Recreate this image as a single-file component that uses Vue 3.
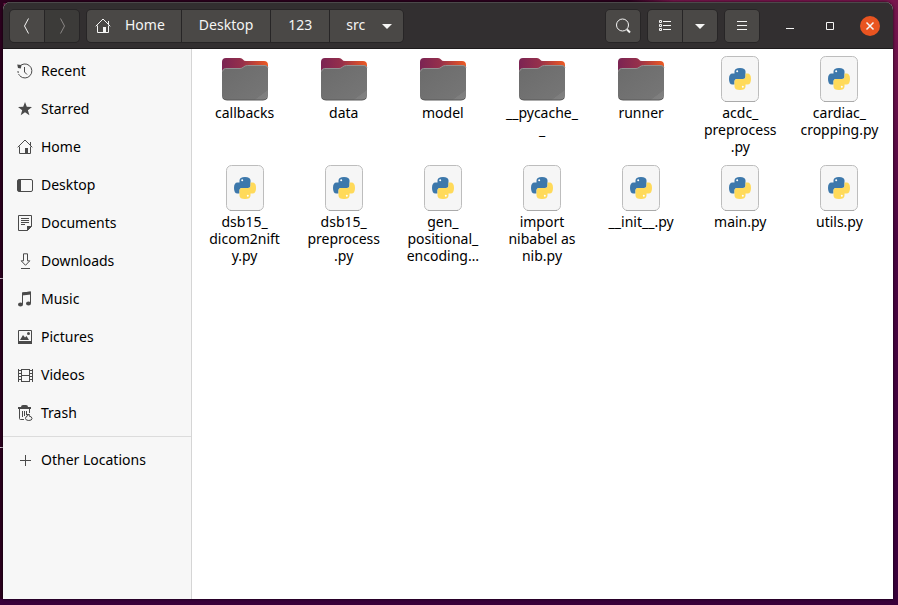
<script setup>
const places = [
  { name: 'Recent', icon: 'recent' },
  { name: 'Starred', icon: 'star' },
  { name: 'Home', icon: 'home' },
  { name: 'Desktop', icon: 'desktop' },
  { name: 'Documents', icon: 'documents' },
  { name: 'Downloads', icon: 'downloads' },
  { name: 'Music', icon: 'music' },
  { name: 'Pictures', icon: 'pictures' },
  { name: 'Videos', icon: 'videos' },
  { name: 'Trash', icon: 'trash' },
]

const items = [
  { type: 'folder', name: 'callbacks' },
  { type: 'folder', name: 'data' },
  { type: 'folder', name: 'model' },
  { type: 'folder', name: '__pycache_\n_' },
  { type: 'folder', name: 'runner' },
  { type: 'python', name: 'acdc_\npreprocess\n.py' },
  { type: 'python', name: 'cardiac_\ncropping.py' },
  { type: 'python', name: 'dsb15_\ndicom2nift\ny.py' },
  { type: 'python', name: 'dsb15_\npreprocess\n.py' },
  { type: 'python', name: 'gen_\npositional_\nencoding…' },
  { type: 'python', name: 'import\nnibabel as\nnib.py' },
  { type: 'python', name: '__init__.py' },
  { type: 'python', name: 'main.py' },
  { type: 'python', name: 'utils.py' },
]
</script>

<template>
  <svg class="defs" width="0" height="0" aria-hidden="true">
    <defs>
      <linearGradient id="tab" x1="0" y1="0" x2="1" y2="0">
        <stop offset="0" stop-color="#7b2453" />
        <stop offset="0.45" stop-color="#96304b" />
        <stop offset="1" stop-color="#ee5a22" />
      </linearGradient>
      <linearGradient id="front" x1="0" y1="0" x2="1" y2="1">
        <stop offset="0" stop-color="#6b6b6b" />
        <stop offset="0.85" stop-color="#757575" />
        <stop offset="0.86" stop-color="#7e7e7e" />
        <stop offset="1" stop-color="#828282" />
      </linearGradient>
    </defs>
    <symbol id="i-home" viewBox="0 0 16 16">
      <path d="M.7 8.300 8 1l7.300 7.300M2.500 7.500v7h11v-7M13.500 3v4" fill="none" stroke="currentColor" />
      <path d="M8 9h3v6H8z" fill="currentColor" />
    </symbol>
    <symbol id="i-recent" viewBox="0 0 16 16">
      <path d="M2.300 3.700A7 7 0 1 1 3 13" fill="none" stroke="currentColor" />
      <path d="M1 8A7 7 0 0 0 3 13" fill="none" stroke="currentColor" stroke-dasharray="2 1" />
      <path d="M7.500 4v5l2.500 2.500" fill="none" stroke="currentColor" />
      <path d="M.2 1.500 4.500 2 3.800 5.500 1 5z" fill="currentColor" />
    </symbol>
    <symbol id="i-star" viewBox="0 0 16 16">
      <path d="m8 1 1.800 4.800 5.200.2-4.100 3.200 1.500 5L8 11.300 3.700 14.200l1.500-5L1 6l5.200-.2z" fill="currentColor" />
    </symbol>
    <symbol id="i-desktop" viewBox="0 0 16 16">
      <rect x=".5" y="2.500" width="15" height="12" rx="1.500" fill="none" stroke="currentColor" />
      <path d="M1 3h3v11H1z" fill="currentColor" />
    </symbol>
    <symbol id="i-documents" viewBox="0 0 16 16">
      <path d="M1.500.5h13v11l-4 4h-9z M4 3.500h8M4 5.500h8M4 7.500h8M4 9.500h4" fill="none" stroke="currentColor" />
      <path d="M10 11h5l-5 5z" fill="currentColor" />
    </symbol>
    <symbol id="i-downloads" viewBox="0 0 16 16">
      <path d="M6.500.8h4v7h2.300L8.500 12.300 4.200 7.800h2.300zM4 15.500h9" fill="none" stroke="currentColor" />
    </symbol>
    <symbol id="i-music" viewBox="0 0 16 16">
      <path d="M5.500 13V2l8-1v11" fill="none" stroke="currentColor" />
      <path d="M5 1.500 14 .5v3L5 4.500z" fill="currentColor" />
      <ellipse cx="3.500" cy="13.500" rx="2.500" ry="2" fill="currentColor" />
      <ellipse cx="11.500" cy="12.500" rx="2.500" ry="2" fill="currentColor" />
    </symbol>
    <symbol id="i-pictures" viewBox="0 0 16 16">
      <path d="M1.500 1.500h13v12h-13z" fill="none" stroke="currentColor" />
      <path d="M1 12h14v3H1zM3 11l3-5 2 2.500L9.500 7l2.500 4z" fill="currentColor" />
      <circle cx="11.500" cy="4.500" r="1.500" fill="currentColor" />
    </symbol>
    <symbol id="i-videos" viewBox="0 0 16 16">
      <path d="M4.500 2v12.500M12.500 2v12.500M4 2.500h9M5 8.500h7M4 14.500h9M1.500 2v13M15.500 2v13" fill="none" stroke="currentColor" />
      <path d="M2 3.500h2M2 6.500h2M2 9.500h2M2 12.500h2M13 3.500h2M13 6.500h2M13 9.500h2M13 12.500h2" stroke="currentColor" />
    </symbol>
    <symbol id="i-trash" viewBox="0 0 16 16">
      <path d="M1 2h13v2H1zM4 2q0-2 2-2h3q2 0 2 2z" fill="currentColor" />
      <path d="M2.500 4v9.500q0 1 1 1H7M12.500 4v4M5.500 6v6M7.500 6v5M9.500 6v4" fill="none" stroke="currentColor" />
      <path d="M8.500 13.500q0-2 2-2.500l-.5-1.500h2.500L12 11q3 .5 3 2.500 0 2-3.200 2t-3.300-2z" fill="none" stroke="currentColor" />
    </symbol>
    <symbol id="i-plus" viewBox="0 0 16 16">
      <path d="M8.500 3v11M3 8.500h11" fill="none" stroke="currentColor" />
    </symbol>
    <symbol id="i-folder" viewBox="0 0 48 48">
      <path d="M1 39V7q0-4 4-4h14q2 0 3 1.500T25 6h18q4 0 4 4v29z" fill="url(#tab)" />
      <path d="M1 41V17q0-3.500 3.500-3.500H19q2 0 3.500-1.500t4-1.500H44q3 0 3 3V41q0 4-4 4H5q-4 0-4-4z" fill="url(#front)" />
      <path d="M1.500 16.500q.5-3 3-3H19q2 0 3.500-1.500t4-1.500H44q2.500 0 3 2.500" fill="none" stroke="#929292" />
      <path d="M2 43q1 2 4 2h36q3 0 4-2" fill="none" stroke="#5a5a5a" />
    </symbol>
    <symbol id="i-python" viewBox="0 0 48 48">
      <rect x="5.500" y="1.500" width="37" height="45" rx="5" fill="#f6f6f6" stroke="#bdbdbd" />
      <path d="M9 46.500h30" stroke="#aaa" />
      <g transform="translate(13 13)">
        <path d="M5.500 5.500v-2Q5.500 0 11 0t5.500 3.500v5q0 2.500-2.500 2.500H8q-2.500 0-2.500 2.500v3h-2Q0 16.500 0 11t3.500-5.500z" fill="#3d78ab" />
        <path d="M16.500 16.500v2q0 3.500-5.500 3.500t-5.500-3.500v-5Q5.500 11 8 11h6q2.500 0 2.500-2.500v-3h2q3.500 0 3.500 5.500t-3.500 5.500z" fill="#ffda5a" />
        <circle cx="8.200" cy="3.200" r="1" fill="#fff" />
        <circle cx="13.800" cy="18.800" r="1" fill="#fff" />
      </g>
    </symbol>
  </svg>

  <div class="desk">
    <div class="window">
      <header class="bar">
        <div class="group nav">
          <button type="button" aria-label="Back"><svg class="ic" viewBox="0 0 16 16"><path d="M9.500.5 5.500 8l4 7.500" fill="none" stroke="currentColor" /></svg></button>
          <button type="button" aria-label="Forward" disabled><svg class="ic" viewBox="0 0 16 16"><path d="M6.500.5l4 7.500-4 7.500" fill="none" stroke="currentColor" /></svg></button>
        </div>
        <nav class="group path" aria-label="Path">
          <button type="button" class="first"><svg class="ic"><use href="#i-home" /></svg><span class="label">Home</span></button>
          <button type="button"><span class="label">Desktop</span></button>
          <button type="button"><span class="label">123</span></button>
          <button type="button" class="last"><span class="label">src</span><svg class="ic" viewBox="0 0 16 16"><path d="M3 6h10l-5 5z" fill="currentColor" /></svg></button>
        </nav>
        <div class="tools">
          <div class="group"><button type="button" aria-label="Search"><svg class="ic" viewBox="0 0 16 16"><circle cx="7.500" cy="7" r="6" fill="none" stroke="currentColor" /><path d="m12 11.500 3 3" stroke="currentColor" stroke-width="2" /></svg></button></div>
          <div class="group">
            <button type="button" aria-label="List view"><svg class="ic" viewBox="0 0 16 16"><path d="M2.500 2.500h2v2h-2zM2.500 6.500h2v2h-2zM2.500 10.500h2v2h-2zM6 3.500h8M6 7.500h8M6 11.500h8" fill="none" stroke="currentColor" /></svg></button>
            <button type="button" aria-label="View options"><svg class="ic" viewBox="0 0 16 16"><path d="M3 6h10l-5 5z" fill="currentColor" /></svg></button>
          </div>
          <div class="group"><button type="button" aria-label="Menu"><svg class="ic" viewBox="0 0 16 16"><path d="M3 3.500h10M3 7.500h10M3 11.500h10" stroke="currentColor" /></svg></button></div>
        </div>
        <div class="controls">
          <button type="button" aria-label="Minimize"><svg class="ic" viewBox="0 0 16 16"><path d="M4 10.500h8" stroke="currentColor" /></svg></button>
          <button type="button" aria-label="Maximize"><svg class="ic" viewBox="0 0 16 16"><path d="M4.500 4.500h7v7h-7z" fill="none" stroke="currentColor" /></svg></button>
          <button type="button" aria-label="Close" class="close"><svg class="ic" viewBox="0 0 16 16"><path d="m4.500 4.500 7 7m0-7-7 7" stroke="currentColor" stroke-width="1.500" /></svg></button>
        </div>
      </header>

      <div class="body">
        <aside class="side">
          <a v-for="p in places" :key="p.name" href="#" class="place"><svg class="ic"><use :href="'#i-' + p.icon" /></svg><span class="label">{{ p.name }}</span></a>
          <hr />
          <a href="#" class="place"><svg class="ic"><use href="#i-plus" /></svg><span class="label">Other Locations</span></a>
        </aside>
        <main class="files">
          <a v-for="(f, n) in items" :key="n" href="#" class="item">
            <svg class="big"><use :href="'#i-' + f.type" /></svg>
            <span class="name">{{ f.name }}</span>
          </a>
        </main>
      </div>
    </div>
  </div>
</template>

<style>
body {
  background: #35042f;
}
</style>

<style scoped>
.defs {
  position: absolute;
}
.desk {
  box-sizing: border-box;
  min-height: 100vh;
  display: flex;
  padding: 2px 5px 6px 3px;
  background: linear-gradient(#c9b9c4, #c9b9c4) 0 46% / 3px 1px no-repeat,
    linear-gradient(#c9b9c4, #c9b9c4) 0 74% / 3px 1px no-repeat,
    linear-gradient(to right, #2c001e 0, #2c001e 70%, transparent 75%) 0 0 / 100% 3px no-repeat,
    linear-gradient(to right, #2c001e 0, #2c001e 3px, transparent 4px) 0 0 / 100% 99% no-repeat,
    linear-gradient(to bottom, #78164d 0, #4a0540 40%, #38003a 100%);
  font: 14px/17px "Noto Sans", "Open Sans", sans-serif;
}
.window {
  flex: 1;
  display: flex;
  flex-direction: column;
  border-radius: 8px 8px 0 0;
  overflow: hidden;
  background: #fff;
  box-shadow: 0 0 3px rgba(0, 0, 0, 0.8);
}
.bar {
  box-sizing: border-box;
  height: 47px;
  display: flex;
  align-items: center;
  gap: 6px;
  padding: 0 13px 0 6px;
  background: #322f30;
  border-top: 1px solid #4b494a;
  border-bottom: 1px solid #1d1b1c;
}
button {
  height: 32px;
  min-width: 34px;
  display: flex;
  align-items: center;
  justify-content: center;
  padding: 0;
  border: 0;
  background: #4a4846;
  color: #f5f5f4;
  font: inherit;
}
button:disabled {
  background: #3c3b39;
  color: #8a8886;
}
.group {
  display: flex;
  gap: 1px;
  overflow: hidden;
  border: 1px solid #272526;
  border-radius: 5px;
  background: #272526;
}
.path button {
  padding: 0 17px;
}
.path .first {
  gap: 14px;
  padding: 0 16px 0 8px;
}
.path .last {
  gap: 14px;
  padding: 0 8px 0 16px;
}
.label {
  padding-bottom: 2px;
}
.tools {
  display: flex;
  gap: 6px;
  margin-left: auto;
}
.controls {
  display: flex;
  align-items: center;
  gap: 20px;
  margin-left: 14px;
}
.controls button {
  width: 20px;
  min-width: 20px;
  height: 20px;
  background: none;
}
.controls .close {
  border-radius: 50%;
  background: #e95420;
}
.ic {
  width: 16px;
  height: 16px;
  flex: none;
}
.body {
  flex: 1;
  display: flex;
}
.side {
  box-sizing: border-box;
  flex: none;
  width: 189px;
  padding-top: 3px;
  border-right: 1px solid #d5d5d5;
  background: #f7f7f7;
}
.place {
  display: flex;
  align-items: center;
  gap: 8px;
  height: 38px;
  padding-left: 14px;
  color: #000;
  text-decoration: none;
}
.place .ic {
  color: #4a4a4a;
}
hr {
  margin: 4px 0;
  border: 0;
  border-top: 1px solid #dcdcdc;
}
.files {
  flex: 1;
  display: grid;
  grid-template-columns: repeat(auto-fill, minmax(96px, 1fr));
  align-content: start;
  row-gap: 8px;
  padding: 6px 4px 6px 3px;
}
.item {
  display: flex;
  flex-direction: column;
  align-items: center;
  gap: 1px;
  min-height: 101px;
  color: #000;
  text-align: center;
  text-decoration: none;
}
.name {
  white-space: pre;
}
.big {
  width: 48px;
  height: 48px;
}
</style>
